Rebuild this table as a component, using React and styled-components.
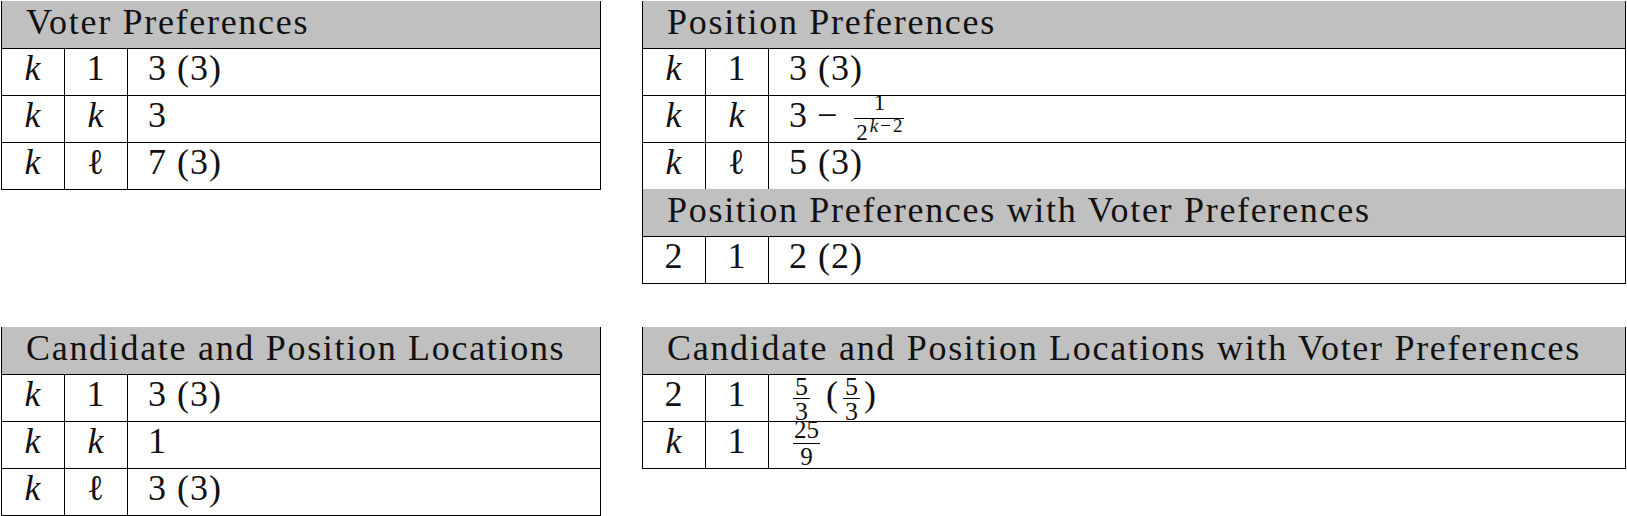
import React from "react";
import styled, { createGlobalStyle } from "styled-components";

const FAMILY = `"Liberation Serif"`;
const serif = () => FAMILY;

const GlobalStyle = createGlobalStyle`
  body {
    margin: 0;
    background: #fff;
  }
`;

const Page = styled.div`
  display: grid;
  grid-template-columns: 600px 984px;
  column-gap: 41px;
  row-gap: 43px;
  align-items: start;
  padding: 1px 0 0 1px;
  color: #111;
  font-family: ${serif};
`;

const Table = styled.div`
  border-left: 1px solid #000;
  border-right: 1px solid #000;
  border-bottom: 1px solid #000;
`;

const HeadRow = styled.div`
  box-sizing: border-box;
  height: 47px;
  padding-left: 24px;
  background: #c0c0c0;
  font-family: ${serif};
  font-size: 36px;
  letter-spacing: 1.7px;
  line-height: 42px;
  white-space: nowrap;
`;

const DataRow = styled.div`
  box-sizing: border-box;
  display: grid;
  grid-template-columns: 63px 63px 1fr;
  height: 47px;
  border-top: 1px solid #000;
`;

const Cell = styled.div`
  box-sizing: border-box;
  border-right: 1px solid #000;
  font-family: ${serif};
  font-size: 36px;
  letter-spacing: 1px;
  line-height: 39px;
  text-align: center;
  white-space: nowrap;
`;

const ValueCell = styled(Cell)`
  border-right: none;
  text-align: left;
  padding-left: 20px;
`;

const Var = styled.span`
  font-family: ${serif};
  font-style: italic;
`;

const Op = styled.span`
  font-family: ${serif};
  margin: 0 12px 0 9px;
`;

const FracBox = styled.span`
  display: inline-flex;
  flex-direction: column;
  text-align: center;
  font-family: ${serif};
  font-size: ${(p) => p.$size}px;
  letter-spacing: 0;
  vertical-align: ${(p) => p.$raise}px;
  margin: -30px ${(p) => p.$right || 4}px 0 4px;
`;

const Num = styled.span`
  display: block;
  line-height: 0.85em;
  padding: 0 1px ${(p) => p.$gap}px;
  border-bottom: 1px solid #000;
`;

const Den = styled.span`
  display: block;
  line-height: 0.85em;
  padding: ${(p) => p.$gap}px 2px 0;
`;

const Sup = styled.span`
  font-family: ${serif};
  font-size: 19px;
  line-height: 0;
  vertical-align: 8px;
  margin-left: 2px;
`;

const SupOp = styled.span`
  margin: 0 2px;
`;

const Frac = ({ num, den, size, raise, gap, dgap, right }) => (
  <FracBox $size={size} $raise={raise} $right={right}>
    <Num $gap={gap}>{num}</Num>
    <Den $gap={dgap}>{den}</Den>
  </FracBox>
);

const k = <Var>k</Var>;
const ell = <span>ℓ</span>;

const left = [
  {
    id: "voter",
    sections: [
      {
        title: "Voter Preferences",
        rows: [
          [k, "1", "3 (3)"],
          [k, k, "3"],
          [k, ell, "7 (3)"],
        ],
      },
    ],
  },
  {
    id: "locations",
    sections: [
      {
        title: "Candidate and Position Locations",
        rows: [
          [k, "1", "3 (3)"],
          [k, k, "1"],
          [k, ell, "3 (3)"],
        ],
      },
    ],
  },
];

const right = [
  {
    id: "position",
    sections: [
      {
        title: "Position Preferences",
        rows: [
          [k, "1", "3 (3)"],
          [
            k,
            k,
            <>
              3<Op>−</Op>
              <Frac
                size={23}
                raise={17}
                gap={5}
                dgap={4}
                num="1"
                den={
                  <>
                    2
                    <Sup>
                      <Var>k</Var>
                      <SupOp>−</SupOp>2
                    </Sup>
                  </>
                }
              />
            </>,
          ],
          [k, ell, "5 (3)"],
        ],
      },
      {
        title: "Position Preferences with Voter Preferences",
        rows: [["2", "1", "2 (2)"]],
      },
    ],
  },
  {
    id: "locations-voter",
    sections: [
      {
        title: "Candidate and Position Locations with Voter Preferences",
        rows: [
          [
            "2",
            "1",
            <>
              <Frac size={26} raise={11} gap={0} dgap={2} num="5" den="3" right={6} />{" "}
              (<Frac size={26} raise={11} gap={0} dgap={2} num="5" den="3" />)
            </>,
          ],
          [k, "1", <Frac size={25} raise={15} gap={3} dgap={2} num="25" den="9" />],
        ],
      },
    ],
  },
];

const ResultTable = ({ table }) => (
  <Table>
    {table.sections.map((section) => (
      <React.Fragment key={section.title}>
        <HeadRow>{section.title}</HeadRow>
        {section.rows.map((row, i) => (
          <DataRow key={i}>
            <Cell>{row[0]}</Cell>
            <Cell>{row[1]}</Cell>
            <ValueCell>{row[2]}</ValueCell>
          </DataRow>
        ))}
      </React.Fragment>
    ))}
  </Table>
);

export default function App() {
  return (
    <>
      <GlobalStyle />
      <Page>
        <ResultTable table={left[0]} />
        <ResultTable table={right[0]} />
        <ResultTable table={left[1]} />
        <ResultTable table={right[1]} />
      </Page>
    </>
  );
}
